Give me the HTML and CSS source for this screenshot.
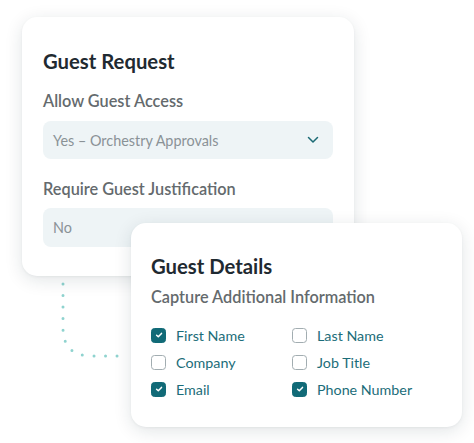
FILE: index.html
```html
<!DOCTYPE html>
<html>
<head>
<meta charset="utf-8">
<link rel="stylesheet" href="styles.css">
</head>
<body>
<div class="stage">
  <svg class="connector" width="474" height="443" viewBox="0 0 474 443">
    <path d="M63 284 L63 328 Q63 356 92 356 L124 356" fill="none" stroke="#8fd3cf" stroke-width="3" stroke-linecap="round" stroke-dasharray="0 11.5"/>
  </svg>
  <div class="card card-request">
    <h2 class="title">Guest Request</h2>
    <div class="label label-first">Allow Guest Access</div>
    <div class="field field-select">
      <span>Yes – Orchestry Approvals</span>
      <svg class="chev" width="12" height="8" viewBox="0 0 12 8"><path d="M1.5 1.5 L6 6 L10.5 1.5" fill="none" stroke="#1b6a74" stroke-width="1.5" stroke-linecap="round" stroke-linejoin="round"/></svg>
    </div>
    <div class="label label-second">Require Guest Justification</div>
    <div class="field"><span>No</span></div>
  </div>
  <div class="card card-details">
    <h2 class="title">Guest Details</h2>
    <div class="label sub">Capture Additional Information</div>
    <div class="checks">
      <div class="check"><span class="box on"><svg width="10" height="10" viewBox="0 0 10 10"><path d="M2.6 5.2 L4.3 6.8 L7.5 3.4" fill="none" stroke="#fff" stroke-width="1.5" stroke-linecap="round" stroke-linejoin="round"/></svg></span>First Name</div>
      <div class="check"><span class="box"></span>Last Name</div>
      <div class="check"><span class="box"></span>Company</div>
      <div class="check"><span class="box"></span>Job Title</div>
      <div class="check"><span class="box on"><svg width="10" height="10" viewBox="0 0 10 10"><path d="M2.6 5.2 L4.3 6.8 L7.5 3.4" fill="none" stroke="#fff" stroke-width="1.5" stroke-linecap="round" stroke-linejoin="round"/></svg></span>Email</div>
      <div class="check"><span class="box on"><svg width="10" height="10" viewBox="0 0 10 10"><path d="M2.6 5.2 L4.3 6.8 L7.5 3.4" fill="none" stroke="#fff" stroke-width="1.5" stroke-linecap="round" stroke-linejoin="round"/></svg></span>Phone Number</div>
    </div>
  </div>
</div>
</body>
</html>
```
FILE: styles.css
```css
* { box-sizing: border-box; }
html, body { margin: 0; padding: 0; background: #fff; }
body { font-family: Lato, "Noto Sans", sans-serif; }
.stage { position: relative; width: 474px; height: 443px; overflow: hidden; }
.connector { position: absolute; left: 0; top: 0; }
.card {
  position: absolute;
  background: #fff;
  border-radius: 15px;
  box-shadow: 0 4px 18px rgba(20, 40, 50, 0.12), 0 1px 3px rgba(20, 40, 50, 0.05);
  display: flex;
  flex-direction: column;
}
.card-request { left: 22px; top: 17px; width: 332px; height: 259px; padding: 32px 21px 0 21px; }
.card-details { left: 131px; top: 223px; width: 331px; height: 204px; padding: 31px 20px 0 20px; }
.title { margin: 0; font-size: 20.3px; line-height: 24px; font-weight: 700; color: #1f2a31; }
.label { font-size: 16.3px; line-height: 20px; color: #646a6d; font-weight: 600; }
.label-first { margin-top: 18px; }
.label-second { margin-top: 20px; }
.sub { margin-top: 9px; }
.field {
  margin-top: 10px;
  height: 38px;
  border-radius: 8px;
  background: #eef4f6;
  display: flex;
  align-items: center;
  justify-content: space-between;
  padding: 0 10px;
  font-size: 14.4px;
  color: #8a9296;
}
.label-second + .field { margin-top: 9px; height: 39px; }
.chev { margin-right: 4px; }
.checks {
  margin-top: 18px;
  display: grid;
  grid-template-columns: 141px 1fr;
  row-gap: 7px;
}
.check {
  display: flex;
  align-items: center;
  height: 20px;
  font-size: 14.3px;
  color: #1b6d79;
}
.box {
  width: 15px; height: 15px;
  border-radius: 3.5px;
  border: 1.5px solid #a2adb1;
  margin-right: 10px;
  display: flex; align-items: center; justify-content: center;
  flex: none;
}
.box.on { background: #116a77; border-color: #116a77; }
```
